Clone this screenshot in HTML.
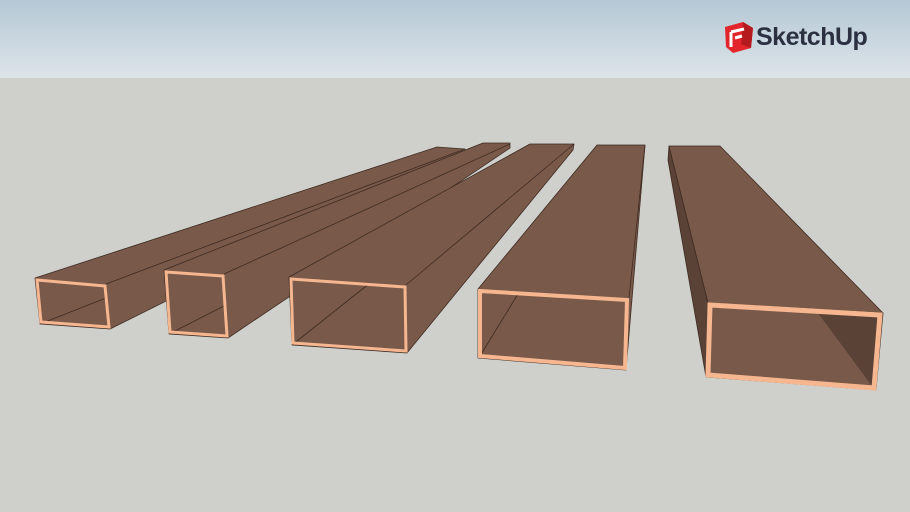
<!DOCTYPE html>
<html><head><style>
html,body{margin:0;padding:0;width:910px;height:512px;overflow:hidden;background:#cfd0cc}
.sky{position:absolute;left:0;top:0;width:910px;height:78px;background:linear-gradient(#b4c8d5,#dde4e9)}
svg{position:absolute;left:0;top:0}
.logo{position:absolute;left:756px;top:23px;font:bold 25px "Liberation Sans",sans-serif;color:#2b3140;letter-spacing:-0.5px}
</style></head><body>
<div class="sky"></div>
<svg width="910" height="512" viewBox="0 0 910 512">
<g fill="#78594a" stroke="#3f2c22" stroke-width="0.8" stroke-linejoin="round">
<!-- beam1 -->
<polygon points="35,278 437,147 465,149 465,152 110,329 40,324"/>
<line x1="106" y1="284" x2="465" y2="149"/>
<line x1="40" y1="324" x2="106" y2="298"/>
<!-- beam2 -->
<polygon points="164,270 483,143 510,143 510,148 228,338 169,334"/>
<line x1="224" y1="274" x2="510" y2="144"/>
<line x1="169" y1="334" x2="224" y2="306"/>
<!-- beam3 -->
<polygon points="289,277 530,144 574,144 573,150 407,353 292,345"/>
<line x1="406" y1="285" x2="574" y2="144"/>
<line x1="292" y1="345" x2="370" y2="283"/>
<!-- beam4 -->
<polygon points="478,289 597,145 645,145 626,370 478,358"/>
<line x1="629" y1="298" x2="645" y2="145"/>
<line x1="480" y1="356" x2="518" y2="294"/>
<!-- beam5 -->
<polygon points="669,146 708,303 706,377 668,160" fill="#5a4236"/>
<polygon points="669,146 720,146 883,313 708,303"/>
<polygon points="708,303 883,313 876,390 706,377"/>
<polygon points="818,313 880,318 872,386" fill="#5a4236" stroke="none"/>
</g>
<g fill="none" stroke="#f6b690" stroke-linejoin="miter">
<polygon points="37,280 105,286 109,327 41,322" stroke-width="3"/>
<polygon points="166,272 223,276 227,336 170,332" stroke-width="3"/>
<polygon points="291,279 405,287 406,351 293,343" stroke-width="3"/>
<polygon points="480,291 627,300 625,368 480,356" stroke-width="4"/>
<polygon points="710,305 880,315 874,388 708,375" stroke-width="5"/>
</g>
<!-- logo cube -->
<g>
<polygon points="725,27 743,22 753,28 751,48 733,53 726,47" fill="#e3262b"/>
<polygon points="743,22 753,28 751,48 741,44" fill="#b51a1f"/>
<path d="M731,32 L744,29 M731,32 L731,47 M735,38 L742,36" stroke="#fff" stroke-width="3" fill="none"/>
</g>
</svg>
<div class="logo">SketchUp</div>
</body></html>
